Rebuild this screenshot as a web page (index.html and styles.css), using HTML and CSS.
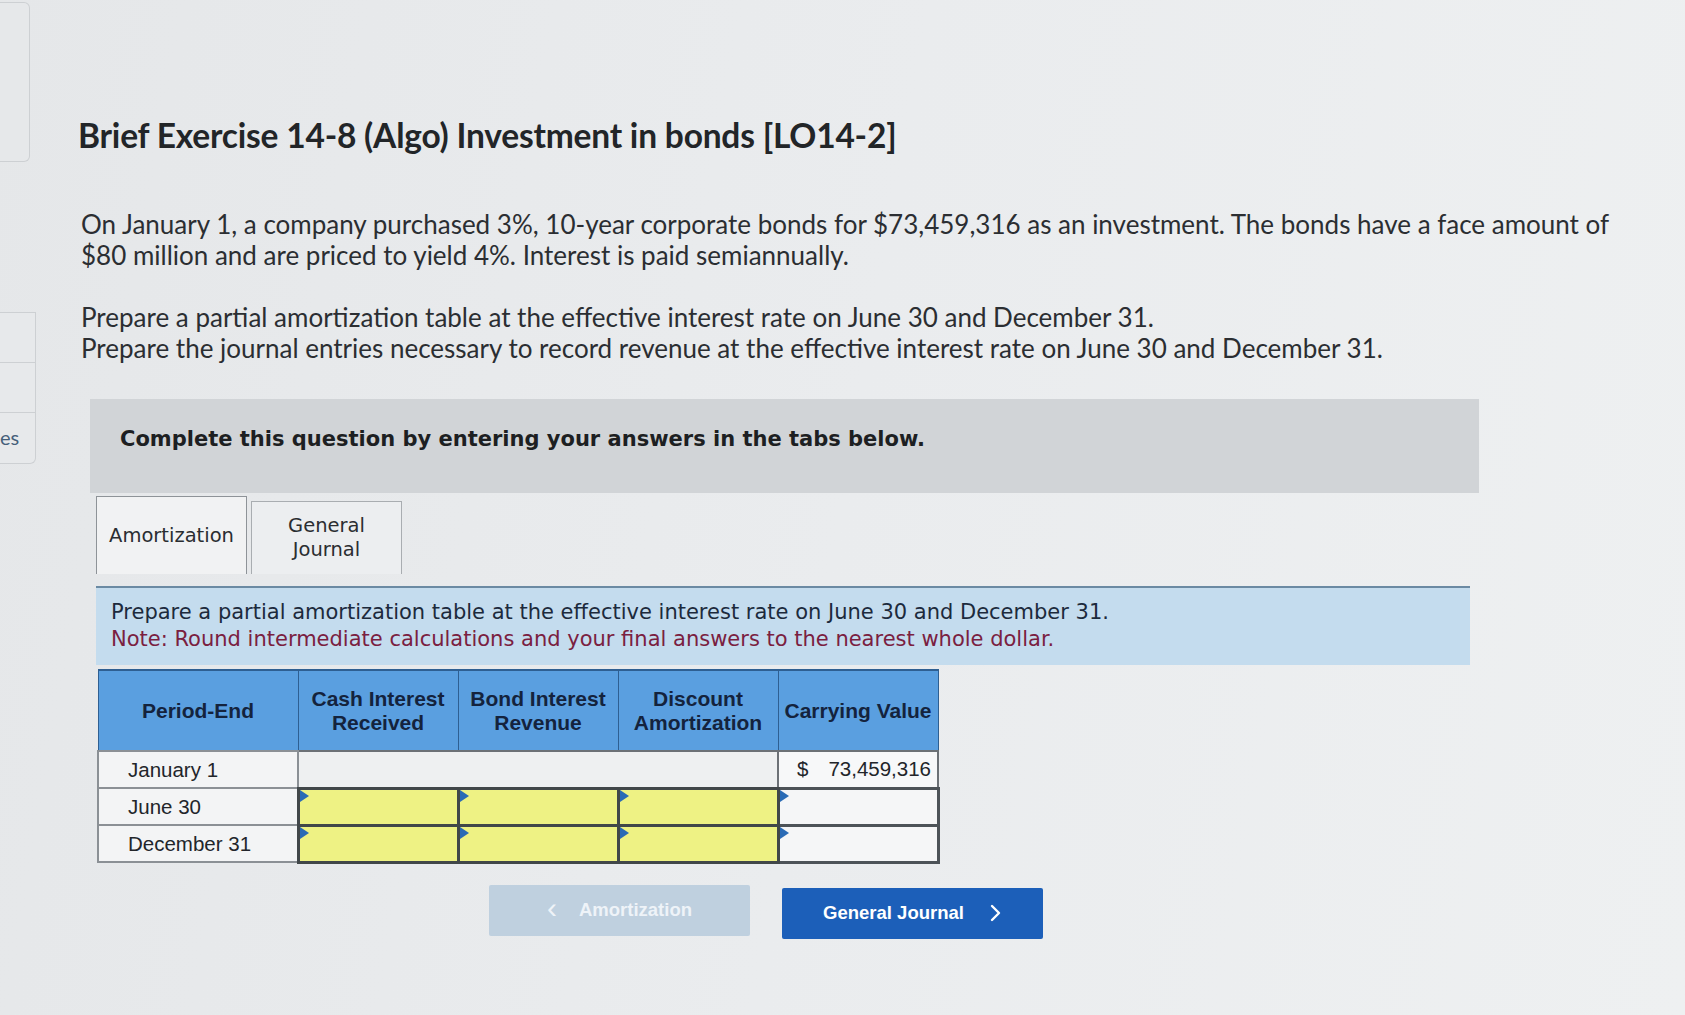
FILE: index.html
```html
<!DOCTYPE html>
<html lang="en">
<head>
<meta charset="utf-8">
<title>Brief Exercise 14-8</title>
<link rel="stylesheet" href="styles.css">
</head>
<body>
<div class="page">
  <aside class="sidebar">
    <div class="side-top"></div>
    <div class="side-group">
      <div class="side-cell"></div>
      <div class="side-cell"></div>
      <div class="side-cell side-label">es</div>
    </div>
  </aside>
  <main class="main">
    <h1 class="title">Brief Exercise 14-8 (Algo) Investment in bonds [LO14-2]</h1>
    <p class="intro">On January 1, a company purchased 3%, 10-year corporate bonds for $73,459,316 as an investment. The bonds have a face amount of<br>$80 million and are priced to yield 4%. Interest is paid semiannually.</p>
    <p class="intro second">Prepare a partial amortization table at the effective interest rate on June 30 and December 31.<br>Prepare the journal entries necessary to record revenue at the effective interest rate on June 30 and December 31.</p>

    <div class="complete-box">Complete this question by entering your answers in the tabs below.</div>

    <div class="tabs">
      <div class="tab active">Amortization</div>
      <div class="tab">General<br>Journal</div>
    </div>

    <div class="instructions">
      <div class="instr-main">Prepare a partial amortization table at the effective interest rate on June 30 and December 31.</div>
      <div class="instr-note">Note: Round intermediate calculations and your final answers to the nearest whole dollar.</div>
    </div>

    <table class="amort">
      <thead>
        <tr>
          <th class="c-period">Period-End</th>
          <th class="c-num">Cash Interest<br>Received</th>
          <th class="c-num">Bond Interest<br>Revenue</th>
          <th class="c-num">Discount<br>Amortization</th>
          <th class="c-num">Carrying Value</th>
        </tr>
      </thead>
      <tbody>
        <tr>
          <td class="label">January 1</td>
          <td class="blank"></td>
          <td class="blank"></td>
          <td class="blank"></td>
          <td class="value"><span class="dollar">$</span><span>73,459,316</span></td>
        </tr>
        <tr>
          <td class="label">June 30</td>
          <td class="input yellow"></td>
          <td class="input yellow"></td>
          <td class="input yellow"></td>
          <td class="input white"></td>
        </tr>
        <tr>
          <td class="label">December 31</td>
          <td class="input yellow"></td>
          <td class="input yellow"></td>
          <td class="input yellow"></td>
          <td class="input white"></td>
        </tr>
      </tbody>
    </table>

    <div class="nav">
      <div class="btn btn-prev"><span class="chev">&#8249;</span>Amortization</div>
      <div class="btn btn-next">General Journal<svg class="chev-svg" width="12" height="18" viewBox="0 0 12 18"><path d="M2 2 L9 9 L2 16" fill="none" stroke="#fff" stroke-width="2.4" stroke-linecap="round" stroke-linejoin="round"/></svg></div>
    </div>
  </main>
</div>
</body>
</html>
```

FILE: styles.css
```css
* { box-sizing: border-box; }

html, body {
  margin: 0;
  padding: 0;
}

body {
  background: linear-gradient(100deg, #e5e7e9 0%, #eaecee 50%, #eef0f1 100%);
  width: 1685px;
  height: 1015px;
  overflow: hidden;
  font-family: "Lato", "Liberation Sans", sans-serif;
  color: #2b2e33;
}

.page {
  display: flex;
  align-items: flex-start;
}

/* left sidebar stub */
.sidebar {
  width: 36px;
  flex: 0 0 36px;
  display: flex;
  flex-direction: column;
}

.side-top {
  width: 30px;
  height: 160px;
  margin-top: 2px;
  border: 1px solid #cdd0d3;
  border-left: none;
  border-radius: 0 6px 6px 0;
  background: #e6e8ea;
}

.side-group {
  margin-top: 150px;
  width: 36px;
  border: 1px solid #cdd0d3;
  border-left: none;
  border-radius: 0 0 6px 0;
  background: #e7e9eb;
}

.side-cell {
  height: 50px;
  border-bottom: 1px solid #cdd0d3;
}

.side-cell:last-child { border-bottom: none; }

.side-label {
  font-family: "Lato", sans-serif;
  font-size: 20px;
  color: #46607a;
  padding-top: 12px;
}

.main {
  width: 1640px;
  padding: 114px 0 0 42px;
}

.title {
  margin: 0;
  font-family: "Lato", sans-serif;
  font-weight: 700;
  font-size: 33.5px;
  line-height: 42px;
  color: #222528;
  letter-spacing: -0.2px;
  white-space: nowrap;
}

.intro {
  margin: 53px 0 0 3px;
  font-family: "Lato", sans-serif;
  font-size: 26px;
  line-height: 31px;
  color: #2b2e32;
  white-space: nowrap;
}

.intro.second {
  margin-top: 31px;
}

.complete-box {
  margin: 35px 0 0 12px;
  width: 1389px;
  height: 94px;
  background: #d1d4d7;
  padding: 28px 0 0 30px;
  font-family: "DejaVu Sans", "Verdana", sans-serif;
  font-weight: 700;
  font-size: 21px;
  line-height: 25px;
  color: #1d1f22;
}

.tabs {
  display: flex;
  align-items: flex-end;
  gap: 4px;
  margin: 3px 0 0 18px;
}

.tab {
  width: 151px;
  height: 73px;
  border: 1px solid #a9adb1;
  border-bottom: none;
  background: #eceef0;
  display: flex;
  align-items: center;
  justify-content: center;
  text-align: center;
  font-family: "DejaVu Sans", "Verdana", sans-serif;
  font-size: 19.5px;
  line-height: 24px;
  color: #2a2d31;
}

.tab.active {
  height: 78px;
  background: #f1f2f3;
  border-color: #8e9398;
}

.instructions {
  margin: 12px 0 0 18px;
  width: 1374px;
  height: 79px;
  background: #c4dcee;
  border-top: 2px solid #6b8aa3;
  padding: 11px 0 0 15px;
  font-family: "DejaVu Sans", "Verdana", sans-serif;
  font-size: 21px;
  line-height: 27px;
  white-space: nowrap;
}

.instr-main { color: #1c2a3c; }
.instr-note { color: #7a2040; }

.amort {
  margin: 4px 0 0 19px;
  border-collapse: collapse;
  font-family: "Liberation Sans", Arial, sans-serif;
  width: 841px;
  table-layout: fixed;
}

.amort th {
  background: #5a9fe0;
  color: #14233d;
  font-weight: 700;
  font-size: 21px;
  line-height: 24px;
  height: 81px;
  border: 1px solid #2e5f92;
  border-top: 2px solid #2e5f92;
  text-align: center;
  padding: 0 2px;
}

.amort th.c-period { width: 200px; }
.amort th.c-num { width: 160px; }

.amort td {
  height: 37px;
  font-size: 20.5px;
  color: #22252a;
  padding: 0;
}

.amort td.label {
  background: #f3f4f5;
  border: 2px solid #8b9095;
  padding-left: 29px;
}

.amort td.blank {
  background: #eef0f1;
  border-top: 2px solid #6c7176;
}

.amort td.value {
  background: #f7f8f9;
  border: 2px solid #6c7176;
  text-align: right;
  padding-right: 6px;
}

.amort td.value .dollar {
  float: left;
  margin-left: 18px;
}

.amort td.input {
  position: relative;
  border: 3px solid #414749;
}

.amort td.input::before {
  content: "";
  position: absolute;
  left: 0;
  top: 0;
  border-left: 9px solid #2a6bb5;
  border-top: 6px solid transparent;
  border-bottom: 6px solid transparent;
}

.amort td.yellow { background: #eef284; }
.amort td.white { background: #f5f6f7; border-color: #4d5358; }

.nav {
  display: flex;
  gap: 32px;
  margin: 21px 0 0 411px;
}

.btn {
  width: 261px;
  height: 51px;
  display: flex;
  align-items: center;
  justify-content: center;
  font-family: "Liberation Sans", Arial, sans-serif;
  font-weight: 700;
  font-size: 18.5px;
  border-radius: 2px;
}

.btn-prev {
  background: #bfd0df;
  color: #eef3f8;
}

.btn-prev .chev {
  font-size: 30px;
  font-weight: 400;
  margin-right: 22px;
  margin-top: -4px;
}

.btn-next {
  background: #1c5fb9;
  color: #ffffff;
  margin-top: 3px;
}

.btn-next .chev-svg {
  margin-left: 26px;
}
```
